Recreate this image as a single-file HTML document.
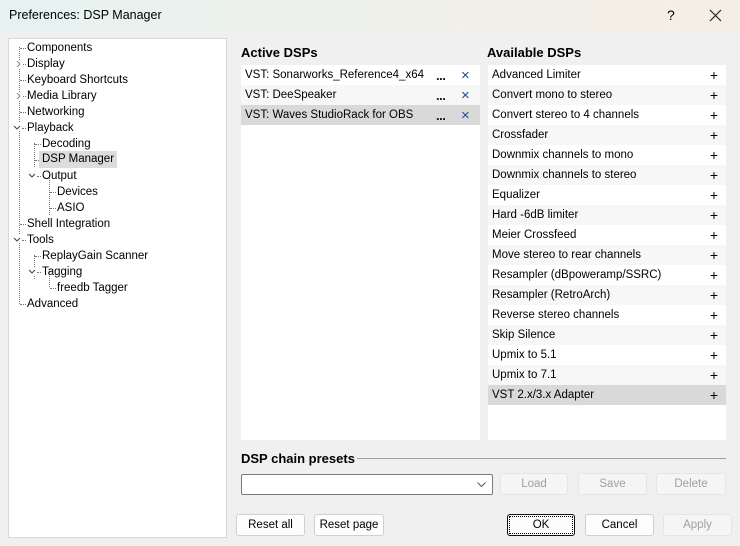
<!DOCTYPE html>
<html><head><style>
*{box-sizing:border-box;margin:0;padding:0}
body{width:740px;height:546px;background:#f0f0f0;font-family:"Liberation Sans",sans-serif;font-size:11.5px;color:#000;position:relative;overflow:hidden}
.title{position:absolute;left:0;top:0;width:740px;height:31px;background:linear-gradient(90deg,#e6f2f1,#f2efe8 70%,#f4efe6);}
.title span{position:absolute;left:9px;top:8px;font-size:12.5px}
.abs{position:absolute}
.tree{position:absolute;left:8px;top:38px;width:219px;height:500px;background:#fff;border:1px solid #d8d8d8}
.ti{position:absolute;white-space:nowrap;height:16px;line-height:16px}
.vl{position:absolute;border-left:1px dotted #777;width:0}
.hl{position:absolute;border-top:1px dotted #777;height:0}
.chev{position:absolute;width:8px;height:8px}
.list{position:absolute;background:#fff}
.row{position:absolute;left:0;right:0;height:20px;line-height:21px;padding-left:4px}
.row .p{position:absolute;right:8px;top:0;font-size:14px}
.dots{position:absolute;left:195px;top:0;font-size:13px;font-weight:bold;letter-spacing:-0.5px;color:#112}
.x{position:absolute;left:220px;top:0;color:#1a4fa0;font-size:15px}
h3{position:absolute;font-size:13px;font-weight:bold}
.btn{position:absolute;height:22px;border:1px solid #d0d0d0;background:#fdfdfd;border-radius:3px;text-align:center;line-height:20px}
.dis{background:#f5f5f5;color:#a0a0a0;border-color:#e5e5e5}
</style></head><body>
<div class="title"><span>Preferences: DSP Manager</span>
<div class="abs" style="left:667px;top:7px;font-size:14px">?</div>
<svg class="abs" style="left:709px;top:9px" width="13" height="13"><path d="M1 1L12 12M12 1L1 12" stroke="#222" stroke-width="1.2"/></svg></div>

<div class="tree">
<div class="vl" style="left:10px;top:8px;height:257px"></div>
<div class="vl" style="left:25px;top:104px;height:24px"></div>
<div class="vl" style="left:40px;top:136px;height:40px"></div>
<div class="vl" style="left:25px;top:216px;height:24px"></div>
<div class="vl" style="left:40px;top:232px;height:16px"></div>
<div class="hl" style="left:11px;top:9px;width:6px"></div>
<div class="hl" style="left:11px;top:41px;width:6px"></div>
<div class="hl" style="left:11px;top:73px;width:6px"></div>
<div class="hl" style="left:11px;top:185px;width:6px"></div>
<div class="hl" style="left:11px;top:265px;width:6px"></div>
<div class="hl" style="left:26px;top:105px;width:6px"></div>
<div class="hl" style="left:26px;top:121px;width:6px"></div>
<div class="hl" style="left:41px;top:153px;width:6px"></div>
<div class="hl" style="left:41px;top:169px;width:6px"></div>
<div class="hl" style="left:26px;top:217px;width:6px"></div>
<div class="hl" style="left:41px;top:249px;width:6px"></div>
<div class="hl" style="left:13px;top:25px;width:4px"></div>
<div class="hl" style="left:13px;top:57px;width:4px"></div>
<div class="hl" style="left:13px;top:89px;width:4px"></div>
<div class="hl" style="left:13px;top:201px;width:4px"></div>
<div class="hl" style="left:28px;top:137px;width:4px"></div>
<div class="hl" style="left:28px;top:233px;width:4px"></div>
<svg class="chev" style="left:6px;top:21px;background:#fff"><path d="M2 1L5 4L2 7" fill="none" stroke="#888"/></svg>
<svg class="chev" style="left:6px;top:53px;background:#fff"><path d="M2 1L5 4L2 7" fill="none" stroke="#888"/></svg>
<svg class="chev" style="left:4px;top:84px;background:#fff"><path d="M1 3L4 6L7 3" fill="none" stroke="#444"/></svg>
<svg class="chev" style="left:4px;top:196px;background:#fff"><path d="M1 3L4 6L7 3" fill="none" stroke="#444"/></svg>
<svg class="chev" style="left:19px;top:132px;background:#fff"><path d="M1 3L4 6L7 3" fill="none" stroke="#444"/></svg>
<svg class="chev" style="left:19px;top:228px;background:#fff"><path d="M1 3L4 6L7 3" fill="none" stroke="#444"/></svg>
<div class="ti" style="left:18px;top:1px">Components</div>
<div class="ti" style="left:18px;top:17px">Display</div>
<div class="ti" style="left:18px;top:33px">Keyboard Shortcuts</div>
<div class="ti" style="left:18px;top:49px">Media Library</div>
<div class="ti" style="left:18px;top:65px">Networking</div>
<div class="ti" style="left:18px;top:81px">Playback</div>
<div class="ti" style="left:33px;top:97px">Decoding</div>
<div class="ti" style="left:30px;top:112px;background:#dcdcdc;padding:0 3px;height:17px">DSP Manager</div>
<div class="ti" style="left:33px;top:129px">Output</div>
<div class="ti" style="left:48px;top:145px">Devices</div>
<div class="ti" style="left:48px;top:161px">ASIO</div>
<div class="ti" style="left:18px;top:177px">Shell Integration</div>
<div class="ti" style="left:18px;top:193px">Tools</div>
<div class="ti" style="left:33px;top:209px">ReplayGain Scanner</div>
<div class="ti" style="left:33px;top:225px">Tagging</div>
<div class="ti" style="left:48px;top:241px">freedb Tagger</div>
<div class="ti" style="left:18px;top:257px">Advanced</div>
</div>

<h3 style="left:241px;top:45px">Active DSPs</h3>
<h3 style="left:487px;top:45px">Available DSPs</h3>

<div class="list" style="left:241px;top:65px;width:239px;height:375px">
<div class="row" style="top:0">VST: Sonarworks_Reference4_x64<span class="dots">...</span><span class="x">×</span></div>
<div class="row" style="top:20px;background:#f7f7f7">VST: DeeSpeaker<span class="dots">...</span><span class="x">×</span></div>
<div class="row" style="top:40px;background:#d9d9d9">VST: Waves StudioRack for OBS<span class="dots">...</span><span class="x">×</span></div>
</div>

<div class="list" style="left:488px;top:65px;width:238px;height:375px">
<div class="row" style="top:0">Advanced Limiter<span class="p">+</span></div>
<div class="row" style="top:20px;background:#f7f7f7">Convert mono to stereo<span class="p">+</span></div>
<div class="row" style="top:40px">Convert stereo to 4 channels<span class="p">+</span></div>
<div class="row" style="top:60px;background:#f7f7f7">Crossfader<span class="p">+</span></div>
<div class="row" style="top:80px">Downmix channels to mono<span class="p">+</span></div>
<div class="row" style="top:100px;background:#f7f7f7">Downmix channels to stereo<span class="p">+</span></div>
<div class="row" style="top:120px">Equalizer<span class="p">+</span></div>
<div class="row" style="top:140px;background:#f7f7f7">Hard -6dB limiter<span class="p">+</span></div>
<div class="row" style="top:160px">Meier Crossfeed<span class="p">+</span></div>
<div class="row" style="top:180px;background:#f7f7f7">Move stereo to rear channels<span class="p">+</span></div>
<div class="row" style="top:200px">Resampler (dBpoweramp/SSRC)<span class="p">+</span></div>
<div class="row" style="top:220px;background:#f7f7f7">Resampler (RetroArch)<span class="p">+</span></div>
<div class="row" style="top:240px">Reverse stereo channels<span class="p">+</span></div>
<div class="row" style="top:260px;background:#f7f7f7">Skip Silence<span class="p">+</span></div>
<div class="row" style="top:280px">Upmix to 5.1<span class="p">+</span></div>
<div class="row" style="top:300px;background:#f7f7f7">Upmix to 7.1<span class="p">+</span></div>
<div class="row" style="top:320px;background:#d9d9d9">VST 2.x/3.x Adapter<span class="p">+</span></div>
</div>

<h3 style="left:241px;top:451px">DSP chain presets</h3>
<div class="abs" style="left:357px;top:458px;width:369px;border-top:1px solid #a0a0a0"></div>
<div class="abs" style="left:241px;top:474px;width:252px;height:21px;background:#fff;border:1px solid #7a7a7a;border-radius:2px"><svg class="abs" style="right:6px;top:7px" width="9" height="6"><path d="M0.5 0.5L4.5 4.5L8.5 0.5" fill="none" stroke="#555"/></svg></div>
<div class="btn dis" style="left:500px;top:473px;width:68px">Load</div>
<div class="btn dis" style="left:578px;top:473px;width:69px">Save</div>
<div class="btn dis" style="left:656px;top:473px;width:70px">Delete</div>
<div class="btn" style="left:236px;top:514px;width:69px">Reset all</div>
<div class="btn" style="left:314px;top:514px;width:70px">Reset page</div>
<div class="btn" style="left:507px;top:514px;width:68px;border:1px solid #111"><div style="position:absolute;inset:1px;border:1px dotted #000"></div>OK</div>
<div class="btn" style="left:585px;top:514px;width:69px">Cancel</div>
<div class="btn dis" style="left:663px;top:514px;width:69px">Apply</div>
</body></html>
